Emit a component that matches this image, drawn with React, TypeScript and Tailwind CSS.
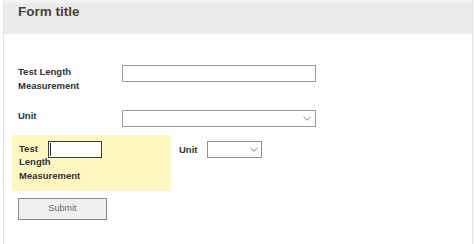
import React from "react";

function Chevron() {
  return (
    <svg width="8" height="5" viewBox="0 0 8 5" className="block">
      <polyline points="0.5,0.8 4,4.2 7.5,0.8" fill="none" stroke="#808080" strokeWidth="1" />
    </svg>
  );
}

export default function App() {
  return (
    <div
      className="w-[474px] h-[244px] bg-white overflow-hidden"
      style={{ fontFamily: '"Liberation Sans", Arial, sans-serif' }}
    >
      <div className="ml-[3px] w-[470px] h-full border-l border-r border-[#e3e3e3]">
        <div className="h-[34px] bg-[#ebebeb] border-t-[3px] border-[#f3f3f3] pl-[14px] pt-[1px]">
          <div className="text-[13.5px] leading-[16px] font-bold text-[#444]">Form title</div>
        </div>

        <div className="pt-[31px] pl-[8px]">
          {/* Row 1 */}
          <div className="flex items-start pl-[6px]">
            <div className="w-[104px] text-[9.5px] leading-[13.5px] font-bold text-[#333]">
              Test Length Measurement
            </div>
            <input
              className="w-[194px] h-[17px] border border-[#9b9b9b] bg-white outline-none"
              type="text"
            />
          </div>

          {/* Row 2 */}
          <div className="flex items-start pl-[6px] mt-[17px]">
            <div className="w-[104px] text-[9.5px] leading-[13.5px] font-bold text-[#333]">Unit</div>
            <div className="mt-[1px] w-[194px] h-[17px] border border-[#9b9b9b] bg-white flex items-center justify-end pr-[4px]">
              <Chevron />
            </div>
          </div>

          {/* Row 3 */}
          <div className="flex items-start mt-[8px]">
            <div className="w-[159px] h-[56px] bg-[#fff6c2] pl-[7px] pt-[6px] flex items-start">
              <div className="w-[29px] mt-[1px] text-[9.5px] leading-[13.3px] font-bold text-[#333]">
                Test Length Measurement
              </div>
              <div className="relative w-[54px] h-[17px] border border-[#3a3a3a] bg-white">
                <div className="absolute left-[1px] top-[1px] w-[1px] h-[13px] bg-[#222]" />
              </div>
            </div>
            <div className="ml-[8px] mt-[8px] w-[28px] text-[9.5px] leading-[13.5px] font-bold text-[#333]">Unit</div>
            <div className="mt-[6px] w-[55px] h-[17px] border border-[#8f8f8f] bg-white flex items-center justify-end pr-[3px]">
              <Chevron />
            </div>
          </div>

          {/* Submit */}
          <div className="pl-[6px] mt-[7px]">
            <button className="w-[89px] h-[22px] bg-[#efefef] border border-[#8a8a8a] text-[9px] text-[#666] flex items-center justify-center">
              Submit
            </button>
          </div>
        </div>
      </div>
    </div>
  );
}
